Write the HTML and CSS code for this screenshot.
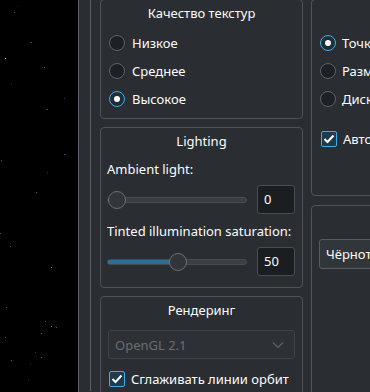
FILE: index.html
```html
<!DOCTYPE html>
<html lang="ru">
<head>
<meta charset="utf-8">
<link rel="stylesheet" href="styles.css">
</head>
<body>
<div class="space">
  <svg class="stars" width="78" height="392" viewBox="0 0 78 392">
    <g fill="#5a5a5a">
      <rect x="14" y="12" width="1" height="1"/>
      <rect x="31" y="42" width="1" height="1"/>
      <rect x="44" y="67" width="1" height="1"/>
      <rect x="11" y="84" width="1" height="1" fill="#333"/>
      <rect x="47" y="109" width="1" height="1"/>
      <rect x="64" y="98" width="1" height="1" fill="#333"/>
      <rect x="17" y="6" width="1" height="1" fill="#2a2a2a"/>
      <rect x="1" y="160" width="1" height="1"/>
      <rect x="36" y="192" width="1" height="1"/>
      <rect x="64" y="154" width="1" height="1"/>
      <rect x="47" y="172" width="1" height="1" fill="#333"/>
      <rect x="0" y="233" width="1" height="1"/>
      <rect x="10" y="246" width="1" height="1"/>
      <rect x="51" y="267" width="1" height="1" fill="#777"/>
      <rect x="6" y="307" width="1" height="1"/>
      <rect x="45" y="321" width="1" height="1"/>
      <rect x="51" y="326" width="1" height="1" fill="#777"/>
      <rect x="56" y="327" width="1" height="1"/>
      <rect x="41" y="333" width="1" height="1"/>
      <rect x="5" y="337" width="1" height="1"/>
      <rect x="35" y="352" width="1" height="1" fill="#333"/>
      <rect x="41" y="357" width="1" height="1"/>
      <rect x="11" y="360" width="1" height="1"/>
      <rect x="30" y="363" width="1" height="1" fill="#333"/>
      <rect x="28" y="380" width="1" height="1" fill="#333"/>
    </g>
    <rect x="5" y="58" width="1" height="1" fill="#e0e0e0"/>
  </svg>
</div>
<div class="dock">
  <div class="frame">
    <div class="columns">
      <div class="col">
        <section class="group g-tex">
          <div class="title">Качество текстур</div>
          <div class="opts">
            <div class="opt"><span class="radio"></span><span>Низкое</span></div>
            <div class="opt"><span class="radio"></span><span>Среднее</span></div>
            <div class="opt"><span class="radio on"></span><span>Высокое</span></div>
          </div>
        </section>
        <section class="group g-light">
          <div class="title">Lighting</div>
          <div class="lbl l1">Ambient light:</div>
          <div class="srow">
            <div class="slider" style="--v:0"><div class="groove"></div><div class="handle"></div></div>
            <div class="spin">0</div>
          </div>
          <div class="lbl l2">Tinted illumination saturation:</div>
          <div class="srow">
            <div class="slider" style="--v:0.5"><div class="groove"><div class="fill"></div></div><div class="handle"></div></div>
            <div class="spin">50</div>
          </div>
        </section>
        <section class="group g-render">
          <div class="title">Рендеринг</div>
          <div class="combo">
            <span>OpenGL 2.1</span>
            <svg width="12" height="8" viewBox="0 0 12 8"><path d="M1 1.5 L6 6.5 L11 1.5" fill="none" stroke="#5e6368" stroke-width="1.2"/></svg>
          </div>
          <div class="opt chk"><span class="check"><svg width="12" height="10" viewBox="0 0 12 10"><path d="M1.5 5 L4.5 8 L10.5 1.5" fill="none" stroke="#fcfcfc" stroke-width="2"/></svg></span><span>Сглаживать линии орбит</span></div>
        </section>
      </div>
      <div class="col col-r">
        <section class="group g-stars">
          <div class="title-space"></div>
          <div class="opts">
            <div class="opt"><span class="radio on"></span><span>Точки</span></div>
            <div class="opt"><span class="radio"></span><span>Размытые точки</span></div>
            <div class="opt"><span class="radio"></span><span>Диски</span></div>
          </div>
          <div class="opt chk auto"><span class="check"><svg width="12" height="10" viewBox="0 0 12 10"><path d="M1.5 5 L4.5 8 L10.5 1.5" fill="none" stroke="#fcfcfc" stroke-width="2"/></svg></span><span>Автоматическая</span></div>
        </section>
        <section class="group g-color">
          <div class="title-space"></div>
          <div class="btn">Чёрнотельные цвета</div>
        </section>
      </div>
    </div>
  </div>
</div>
</body>
</html>
```

FILE: styles.css
```css
html, body {
  margin: 0;
  padding: 0;
  width: 370px;
  height: 392px;
  overflow: hidden;
  background: #000;
}
body {
  display: flex;
  font-family: "Noto Sans", "DejaVu Sans", sans-serif;
  font-size: 13px;
  color: #fcfcfc;
}
.space {
  width: 78px;
  flex: none;
  background: #000;
}
.stars { display: block; }
.dock {
  flex: none;
  width: 292px;
  overflow: hidden;
  background: #2a2e32;
  border-left: 1px solid #5d6166;
  padding-left: 11px;
  box-sizing: border-box;
}
.frame {
  border-left: 1px solid #5d6166;
  padding-left: 9px;
  height: 100%;
}
.columns {
  display: flex;
  gap: 8px;
  margin-top: -1px;
}
.col {
  width: 203px;
  flex: none;
  display: flex;
  flex-direction: column;
  gap: 8px;
}
.col-r { gap: 9px; }
.group {
  border: 1px solid #4f5358;
  border-radius: 4px;
  box-sizing: border-box;
}
.title {
  text-align: center;
  line-height: 18px;
  margin-top: 4px;
}
.title-space {
  height: 18px;
  margin-top: 4px;
}
.opts {
  display: flex;
  flex-direction: column;
  gap: 10px;
  padding: 12px 0 0 8px;
}
.opt {
  display: flex;
  align-items: center;
  gap: 7px;
  height: 18px;
  line-height: 18px;
  white-space: nowrap;
}
.radio {
  width: 16px;
  height: 16px;
  box-sizing: border-box;
  border-radius: 50%;
  border: 1px solid #5e6166;
  background: #1e2124;
  position: relative;
  flex: none;
}
.radio.on {
  border-color: #3daee9;
  background: #1f2e38;
}
.radio.on::after {
  content: "";
  position: absolute;
  left: 4px;
  top: 4px;
  width: 6px;
  height: 6px;
  border-radius: 50%;
  background: #fcfcfc;
}
.g-tex { height: 120px; }
.g-light {
  height: 161px;
  padding: 0 6px;
}
.lbl {
  line-height: 18px;
  white-space: nowrap;
}
.l1 { margin-top: 10px; }
.l2 { margin-top: 8px; }
.srow {
  display: flex;
  align-items: center;
  gap: 10px;
  margin-top: 7px;
  height: 29px;
}
.slider {
  position: relative;
  width: 140px;
  height: 18px;
  flex: none;
}
.groove {
  position: absolute;
  left: 0;
  right: 0;
  top: 6px;
  height: 6px;
  border-radius: 3px;
  background: #3b3f44;
  box-sizing: border-box;
  border: 1px solid #484c51;
  overflow: hidden;
}
.fill {
  position: absolute;
  left: -1px;
  top: -1px;
  bottom: -1px;
  width: calc(var(--v) * 122px + 12px);
  background: #2a6e96;
  box-shadow: inset 0 0 0 1px #3daee9;
  border-radius: 3px;
}
.handle {
  position: absolute;
  top: 0;
  left: calc(var(--v) * 122px + 1px);
  width: 18px;
  height: 18px;
  box-sizing: border-box;
  border-radius: 50%;
  background: #31363b;
  border: 1px solid #6b6f74;
}
.spin {
  width: 38px;
  height: 29px;
  box-sizing: border-box;
  border: 1px solid #4a4e53;
  border-radius: 3px;
  background: #1b1e20;
  padding-left: 6px;
  line-height: 27px;
}
.g-render {
  height: 120px;
  padding: 0 7px;
}
.combo {
  margin-top: 11px;
  height: 29px;
  box-sizing: border-box;
  border: 1px solid #3e4247;
  border-radius: 3px;
  background: #2d3135;
  color: #696d72;
  display: flex;
  align-items: center;
  justify-content: space-between;
  padding: 0 10px 0 6px;
}
.chk {
  margin-top: 11px;
  padding-left: 1px;
  gap: 6px;
}
.check {
  width: 16px;
  height: 16px;
  box-sizing: border-box;
  border: 1px solid #3daee9;
  background: #1f3a4a;
  border-radius: 2px;
  display: flex;
  align-items: center;
  justify-content: center;
  flex: none;
}
.g-stars { height: 197px; }
.g-stars .opt { gap: 6px; }
.auto {
  margin-top: 22px;
  padding-left: 9px;
}
.g-color {
  height: 200px;
  padding: 0 7px;
}
.btn {
  margin-top: 11px;
  height: 30px;
  box-sizing: border-box;
  border: 1px solid #575b60;
  border-radius: 3px;
  background: #31363b;
  line-height: 28px;
  padding-left: 6px;
  white-space: nowrap;
}
```
